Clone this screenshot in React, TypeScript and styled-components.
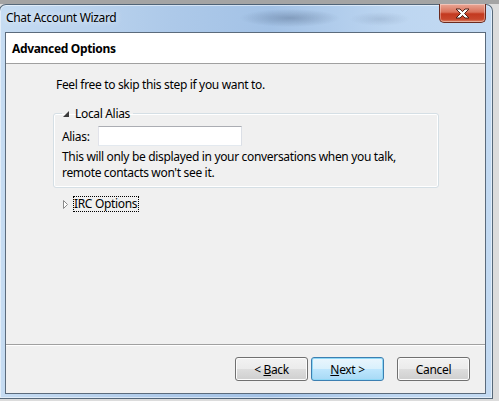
import * as React from 'react'
import styled, {createGlobalStyle} from 'styled-components'

const GlobalStyle = createGlobalStyle `
  html, body {
    margin: 0;
    padding: 0;
  }
  body {
    font-family: "Noto Sans", "DejaVu Sans", sans-serif;
    font-size: 12px;
    letter-spacing: -0.33px;
    color: #000;
  }
`

const Desktop = styled.div `
  width: 499px;
  height: 401px;
  overflow: hidden;
  padding-top: 4px;
  box-sizing: border-box;
  background: linear-gradient(#a4a4a4 0 4px, #dcdcdc 4px);
`

const Window = styled.div `
  width: 494px;
  height: 395px;
  margin-left: -1px;
  box-sizing: border-box;
  display: flex;
  flex-direction: column;
  padding: 0 6px 4px 5px;
  border: 1px solid rgba(40, 55, 70, 0.7);
  border-radius: 7px 7px 0 0;
  background:
    radial-gradient(ellipse 50px 9px at 290px 13px, rgba(60, 80, 110, 0.35), transparent),
    radial-gradient(ellipse 30px 7px at 380px 14px, rgba(90, 110, 140, 0.2), transparent),
    linear-gradient(90deg, #c6dcf2 0%, #adc9e9 35%, #a3c2e6 55%, #bdd6f1 80%, #c3daf2 100%);
  box-shadow: inset 0 0 0 1px rgba(255, 255, 255, 0.5);
`

const TitleBar = styled.div `
  height: 27px;
  display: flex;
  align-items: flex-start;
  justify-content: space-between;
`

const Title = styled.span `
  padding-top: 4px;
  padding-left: 1px;
  color: #000;
  text-shadow: 0 0 6px rgba(255, 255, 255, 0.9);
`

const CloseButton = styled.div `
  width: 45px;
  height: 18px;
  margin-top: -1px;
  display: flex;
  align-items: center;
  justify-content: center;
  border: 1px solid #6b2a1e;
  border-top: none;
  border-radius: 0 0 5px 5px;
  background: linear-gradient(#e9a796 0%, #d9715a 45%, #c3391f 55%, #c8472c 85%, #de8a6c 100%);
  box-shadow: inset 0 0 0 1px rgba(255, 255, 255, 0.35);
`

const Client = styled.div `
  flex: 1;
  display: flex;
  flex-direction: column;
  background: #f0f0f0;
  border: 1px solid #5b6b7c;
`

const Header = styled.div `
  height: 30px;
  display: flex;
  align-items: center;
  padding-left: 6px;
  background: #fff;
  border-bottom: 1px solid #a0a0a0;
  font-weight: bold;
`

const Body = styled.div `
  flex: 1;
  padding: 13px 46px 0 47px;
`

const Intro = styled.div `
  padding-left: 3px;
  line-height: 15px;
`

const Group = styled.fieldset `
  margin: 14px 0 0;
  padding: 5px 8px 6px;
  border: 1px solid #d5dfe5;
  border-radius: 3px;
  box-shadow: inset 0 0 0 1px #fff;
`

const Legend = styled.legend `
  display: flex;
  align-items: center;
  gap: 6px;
  padding: 0 3px 0 1px;
  line-height: 15px;
`

const AliasRow = styled.div `
  display: flex;
  align-items: center;
  gap: 8px;
`

const TextInput = styled.div `
  width: 142px;
  height: 18px;
  background: #fff;
  border: 1px solid #abadb3;
  border-left-color: #e2e3ea;
  border-right-color: #dbdfe6;
  border-bottom-color: #e3e9ef;
`

const Note = styled.div `
  margin-top: 3px;
  line-height: 16px;
`

const Expander = styled.div `
  display: flex;
  align-items: center;
  gap: 6px;
  margin-top: 9px;
  padding-left: 10px;
`

const ExpanderLabel = styled.span `
  outline: 1px dotted #000;
  line-height: 14px;
  padding: 0 1px 0 0;
`

const Footer = styled.div `
  height: 49px;
  display: flex;
  justify-content: flex-end;
  align-items: flex-start;
  padding: 12px 15px 0 0;
  box-sizing: border-box;
  border-top: 1px solid #a0a0a0;
  box-shadow: inset 0 1px 0 #fff;
`

const Button = styled.div < {$primary?: boolean; $gap: number} > `
  width: 73px;
  height: 24px;
  box-sizing: border-box;
  margin-right: ${p => p.$gap}px;
  display: flex;
  align-items: center;
  justify-content: center;
  border-radius: 3px;
  border: 1px solid ${p => (p.$primary ? '#3c7fb1' : '#707070')};
  background: ${p => (p.$primary
    ? 'linear-gradient(#eaf6fd 0%, #d9f0fc 50%, #bee6fd 51%, #a7d9f5 100%)'
    : 'linear-gradient(#f2f2f2 0%, #ebebeb 50%, #dddddd 51%, #cfcfcf 100%)')};
  box-shadow: inset 0 0 0 1px ${p => (p.$primary ? '#8fd8f6' : '#fcfcfc')};
`

const Expanded = () => (
  <svg width="6" height="6" viewBox="0 0 6 6">
    <polygon points="6,0 6,6 0,6" fill="#3c3c3c"/>
  </svg>
)

const Collapsed = () => (
  <svg width="5" height="9" viewBox="0 0 5 9">
    <polygon points="0.5,0.5 4.5,4.5 0.5,8.5" fill="#fff" stroke="#8a8a8a" strokeWidth="1"/>
  </svg>
)

const CloseGlyph = () => (
  <svg width="17" height="11" viewBox="0 0 17 11">
    <path
      d="M2 1h4l2.5 2.6L11 1h4l-4.5 4.5L15 10h-4L8.5 7.4 6 10H2l4.5-4.5z"
      fill="#fff"
      stroke="#4a2018"
      strokeWidth="1"
      strokeLinejoin="round"/>
  </svg>
)

export default function App() {
  return (
    <React.Fragment>
      <GlobalStyle/>
      <Desktop>
        <Window>
          <TitleBar>
            <Title>Chat Account Wizard</Title>
            <CloseButton>
              <CloseGlyph/>
            </CloseButton>
          </TitleBar>
          <Client>
            <Header>Advanced Options</Header>
            <Body>
              <Intro>Feel free to skip this step if you want to.</Intro>
              <Group>
                <Legend>
                  <Expanded/>
                  <span>Local Alias</span>
                </Legend>
                <AliasRow>
                  <span>Alias:</span>
                  <TextInput/>
                </AliasRow>
                <Note>
                  This will only be displayed in your conversations when you talk,
                  <br/>
                  remote contacts won't see it.
                </Note>
              </Group>
              <Expander>
                <Collapsed/>
                <ExpanderLabel>IRC Options</ExpanderLabel>
              </Expander>
            </Body>
            <Footer>
              <Button $gap={3}>&lt;&nbsp;<u>B</u>ack</Button>
              <Button $primary $gap={13}><u>N</u>ext&nbsp;&gt;</Button>
              <Button $gap={0}>Cancel</Button>
            </Footer>
          </Client>
        </Window>
      </Desktop>
    </React.Fragment>
  )
}
